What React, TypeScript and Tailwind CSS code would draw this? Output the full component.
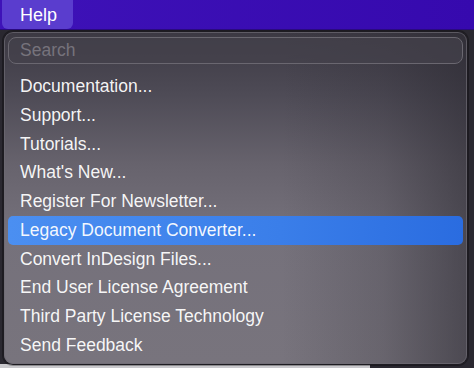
import React from "react";

const items = [
  "Documentation...",
  "Support...",
  "Tutorials...",
  "What's New...",
  "Register For Newsletter...",
  "Legacy Document Converter...",
  "Convert InDesign Files...",
  "End User License Agreement",
  "Third Party License Technology",
  "Send Feedback",
];

export default function App() {
  const font = { fontFamily: '"Liberation Sans", Arial, sans-serif' };
  return (
    <div className="relative w-[474px] h-[368px] overflow-hidden bg-[#2a2830]" style={font}>
      {/* top menubar */}
      <div className="h-[30px] bg-[linear-gradient(90deg,#3e12b8,#3609ae)] border-b border-[#2a0a80] flex">
        <div className="ml-[2px] w-[71px] h-[29px] rounded-b-[6px] bg-[#5a3dce] flex items-center pl-[18px] text-white text-[18px] leading-none">
          Help
        </div>
      </div>
      {/* bottom strip */}
      <div className="absolute left-0 bottom-0 w-[370px] h-[4px] bg-[#c9c8cc]" />

      {/* dropdown menu */}
      <div className="absolute left-[3px] top-[31px] w-[465px] h-[334px] rounded-[10px] border border-[#1e1c22] overflow-hidden shadow-[0_0_0_1px_rgba(0,0,0,0.3)]">
        <div className="absolute inset-0 bg-[linear-gradient(180deg,#3c3943_0%,#4d4a55_18%,#67636d_40%,#75717b_60%,#78747d_100%)]" />
        <div className="absolute inset-0 bg-[linear-gradient(270deg,rgba(40,38,46,0.55)_0%,rgba(40,38,46,0.2)_18%,rgba(40,38,46,0)_40%)]" />
        <div className="absolute inset-0 rounded-[9px] border border-[#6e6b74]/70" />
        <div className="relative flex flex-col pt-[5px] px-[4px]">
          <div className="h-[27px] rounded-[8px] border border-[#6a6770] bg-[#45424b]/70 flex items-center pl-[11px] text-[17.5px] text-[#76737c] leading-none">
            Search
          </div>
          <div className="flex flex-col mt-[8.5px]">
            {items.map((t, i) => (
              <div
                key={t}
                className={
                  "h-[28.75px] flex items-center pl-[12px] text-[17.5px] leading-none text-white/95 rounded-[5px] " +
                  (i === 5
                    ? "bg-[linear-gradient(90deg,#4b8ff1,#3a7ee9_60%,#2a6ce0)]"
                    : "")
                }
              >
                {t}
              </div>
            ))}
          </div>
        </div>
      </div>
    </div>
  );
}
